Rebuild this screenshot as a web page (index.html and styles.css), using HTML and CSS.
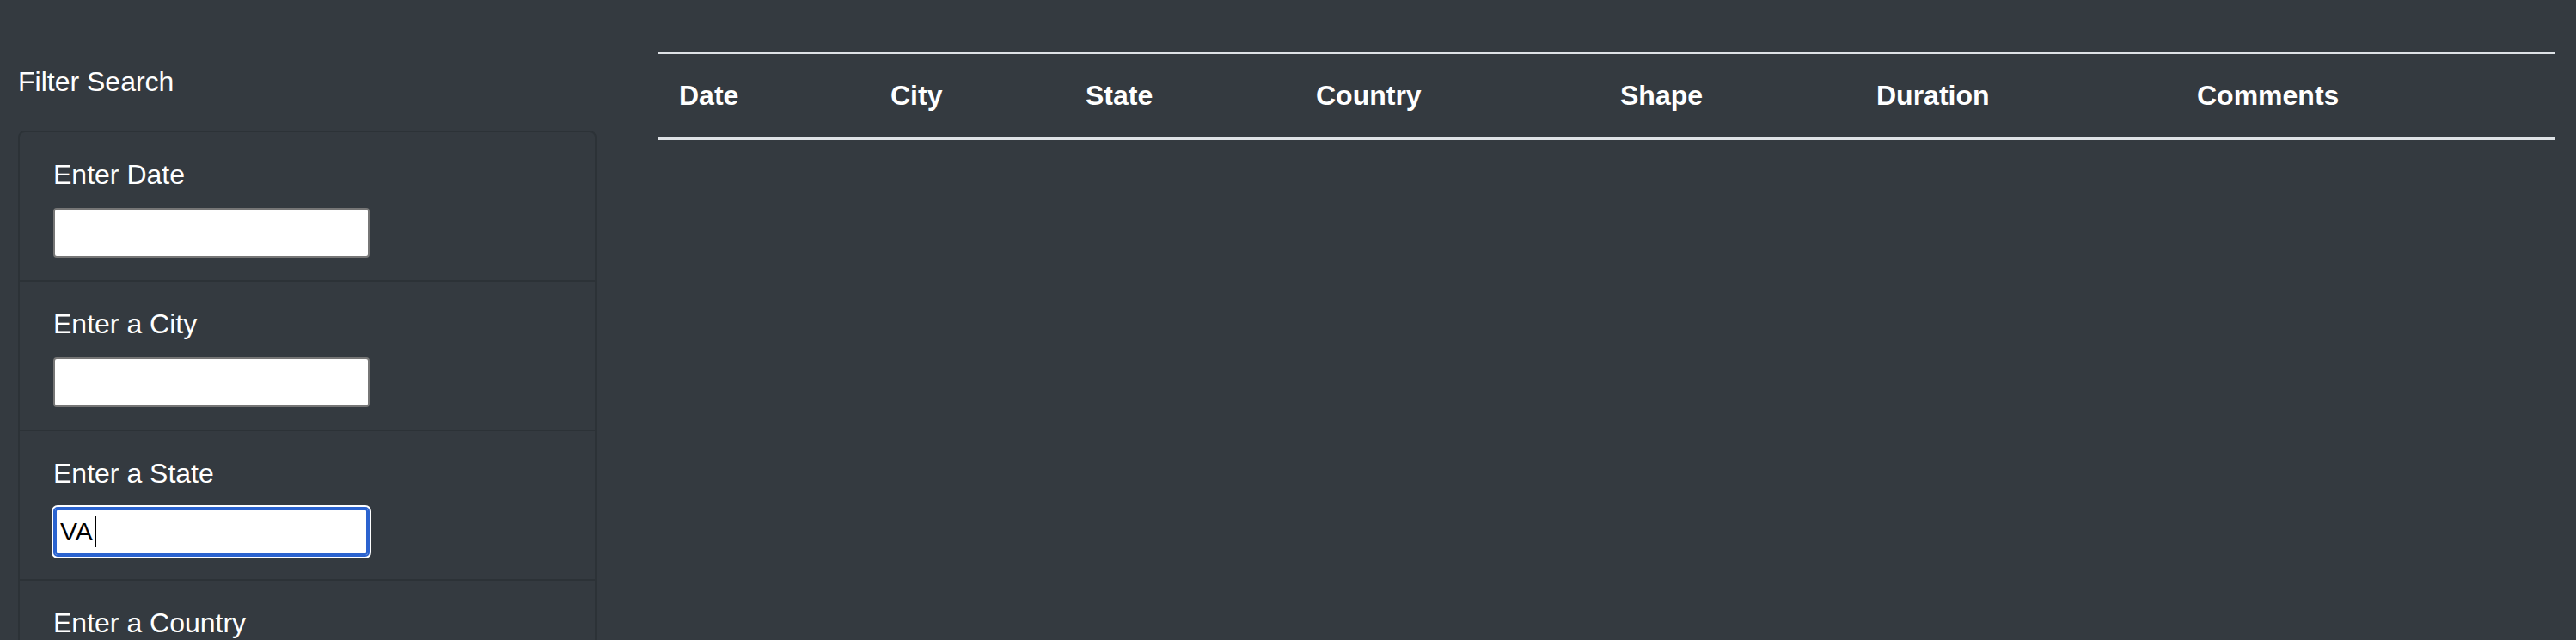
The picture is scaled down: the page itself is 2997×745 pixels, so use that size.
FILE: index.html
```html
<!DOCTYPE html>
<html lang="en">
<head>
<meta charset="utf-8">
<title>UFO Sightings</title>
<link rel="stylesheet" href="styles.css">
</head>
<body>
<div class="page">
  <aside class="sidebar">
    <h2 class="filter-title">Filter Search</h2>
    <form class="card">
      <ul class="filter-list">
        <li class="filter-item">
          <label class="filter-label" for="datetime">Enter Date</label>
          <input class="filter-input" id="datetime" type="text">
        </li>
        <li class="filter-item">
          <label class="filter-label" for="city">Enter a City</label>
          <input class="filter-input" id="city" type="text">
        </li>
        <li class="filter-item">
          <label class="filter-label" for="state">Enter a State</label>
          <div class="field-wrap">
            <input class="filter-input is-focused" id="state" type="text" value="VA">
            <span class="caret"></span>
          </div>
        </li>
        <li class="filter-item">
          <label class="filter-label" for="country">Enter a Country</label>
          <input class="filter-input" id="country" type="text">
        </li>
        <li class="filter-item">
          <label class="filter-label" for="shape">Enter a Shape</label>
          <input class="filter-input" id="shape" type="text">
        </li>
      </ul>
    </form>
  </aside>
  <main class="content">
    <table class="ufo-table">
      <thead>
        <tr>
          <th class="col-date">Date</th>
          <th class="col-city">City</th>
          <th class="col-state">State</th>
          <th class="col-country">Country</th>
          <th class="col-shape">Shape</th>
          <th class="col-duration">Duration</th>
          <th class="col-comments">Comments</th>
        </tr>
      </thead>
      <tbody></tbody>
    </table>
  </main>
</div>
</body>
</html>
```

FILE: styles.css
```css
html, body {
  margin: 0;
  padding: 0;
  background: #343a40;
}

body {
  font-family: "Liberation Sans", Arial, Helvetica, sans-serif;
  color: #ffffff;
  font-size: 32px;
  line-height: 48px;
  overflow: hidden;
}

.page {
  display: flex;
  align-items: flex-start;
  padding-left: 21px;
}

.sidebar {
  width: 673px;
  flex: 0 0 673px;
  padding-top: 71px;
}

.filter-title {
  margin: 0 0 33px 0;
  font-size: 32px;
  line-height: 48px;
  font-weight: 400;
  color: #ffffff;
}

.card {
  display: block;
  margin: 0;
  border: 2px solid #2c3237;
  border-radius: 8px;
  background: #343a40;
}

.filter-list {
  list-style: none;
  margin: 0;
  padding: 0;
}

.filter-item {
  padding: 25px 40px 26px 39px;
  border-bottom: 2px solid #2c3237;
}

.filter-item:last-child {
  border-bottom: none;
}

.filter-label {
  display: block;
  margin-bottom: 15px;
  font-size: 32px;
  line-height: 48px;
  color: #ffffff;
}

.filter-input {
  display: block;
  box-sizing: border-box;
  width: 368px;
  height: 58px;
  margin: 0;
  padding: 0 6px;
  border: 2px solid #767676;
  border-radius: 4px;
  background: #ffffff;
  font-family: "Liberation Sans", Arial, Helvetica, sans-serif;
  font-size: 30px;
  color: #000000;
  outline: none;
  caret-color: transparent;
}

.filter-input.is-focused {
  border: 2px solid #2b63cf;
  border-radius: 5px;
  box-shadow: inset 0 0 0 2px #2b63cf, 0 0 0 2px #ffffff;
}

.field-wrap {
  position: relative;
  width: 368px;
}

.caret {
  position: absolute;
  left: 48px;
  top: 11px;
  width: 2px;
  height: 36px;
  background: #000000;
}

.content {
  margin-left: 72px;
  padding-top: 61px;
  width: 2207px;
  flex: 0 0 2207px;
}

.ufo-table {
  width: 2207px;
  table-layout: fixed;
  border-collapse: separate;
  border-spacing: 0;
}

.ufo-table th {
  box-sizing: border-box;
  padding: 24px;
  text-align: left;
  font-weight: 700;
  font-size: 32px;
  line-height: 48px;
  color: #ffffff;
  border-top: 2px solid #dee2e6;
  border-bottom: 4px solid #dee2e6;
  white-space: nowrap;
}

.col-date { width: 246px; }
.col-city { width: 227px; }
.col-state { width: 268px; }
.col-country { width: 354px; }
.col-shape { width: 298px; }
.col-duration { width: 373px; }
.col-comments { width: 441px; }
```
